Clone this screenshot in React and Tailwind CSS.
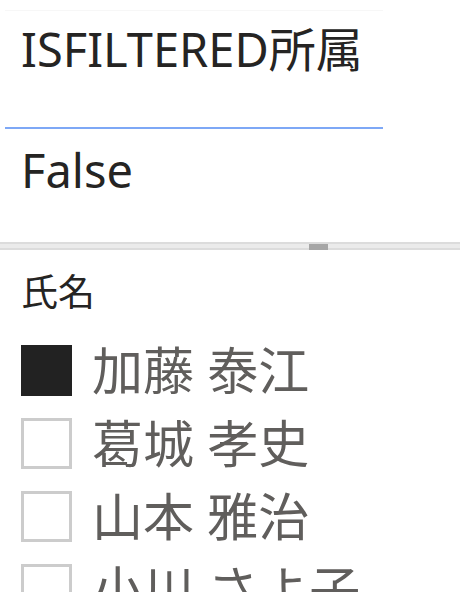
import React from 'react'

const names = [
  { name: '加藤 泰江', checked: true },
  { name: '葛城 孝史', checked: false },
  { name: '山本 雅治', checked: false },
  { name: '小川 さよ子', checked: false },
]

const font = { fontFamily: '"Noto Sans", "Noto Sans CJK JP", sans-serif' }

export default function App() {
  return (
    <div className="w-[460px] h-[604px] bg-white overflow-hidden" style={font}>
      {/* カード */}
      <div className="ml-[5px] w-[378px] mt-[10px] border-t border-[#f7f7f7]">
        <div className="h-[116px] pl-[16px] pt-[10px] text-[47px] leading-[56px] text-[#252423] whitespace-nowrap">
          ISFILTERED所属
        </div>
        <div className="h-[2px] bg-[#7ea8f6]" />
        <div className="h-[110px] pl-[16px] pt-[13px] text-[47px] leading-[56px] text-[#252423]">
          False
        </div>
      </div>

      {/* 区切り */}
      <div className="relative h-[8px] mt-[3px] border-t-[2px] border-b-[2px] border-[#dcdcdc] bg-[#ebebeb]">
        <div className="absolute left-[309px] top-0 w-[19px] h-[6px] bg-[#a6a6a6]" />
      </div>

      {/* スライサー */}
      <div className="h-[342px] overflow-hidden pl-[21px] pt-[20px]">
        <div className="text-[37px] leading-[44px] text-[#252423]">氏名</div>
        <div className="mt-[31px] flex flex-col gap-[22px]">
          {names.map(n => (
            <div key={n.name} className="flex items-center gap-[20px] h-[51px]">
              {n.checked ? (
                <div className="w-[51px] h-[51px] bg-[#222222] shrink-0" />
              ) : (
                <div className="w-[51px] h-[51px] border-[3px] border-[#cccccc] bg-white shrink-0" />
              )}
              <span className="text-[51px] leading-[51px] text-[#605e5c] whitespace-nowrap">{n.name}</span>
            </div>
          ))}
        </div>
      </div>
    </div>
  )
}
